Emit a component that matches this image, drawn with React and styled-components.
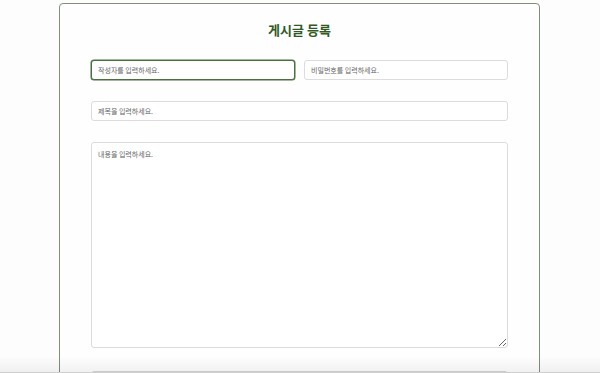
import React from 'react';
import styled, { createGlobalStyle } from 'styled-components';

const GlobalStyle = createGlobalStyle`
  html, body {
    margin: 0;
    padding: 0;
    background: #fdfdfd;
    font-family: "Noto Sans CJK KR", "Noto Sans", sans-serif;
  }
  body::after {
    content: '';
    position: fixed;
    left: 0;
    right: 0;
    bottom: 0;
    height: 16px;
    background: linear-gradient(rgba(0, 0, 0, 0), rgba(0, 0, 0, 0.05));
    border-bottom: 1px solid #cfcfcf;
    pointer-events: none;
  }
`;

const Card = styled.div`
  width: 481px;
  box-sizing: border-box;
  margin: 3px 0 0 59px;
  padding: 16px 31px 40px;
  background: #fefefe;
  border: 1px solid #7f8f7a;
  border-radius: 4px;
`;

const Title = styled.h2`
  margin: 0 0 20px;
  text-align: center;
  font-size: 13px;
  line-height: 20px;
  font-weight: 700;
  color: #2f5a24;
`;

const Form = styled.form`
  display: flex;
  flex-direction: column;
  gap: 21px;
`;

const Row = styled.div`
  display: grid;
  grid-template-columns: 1fr 1fr;
  gap: 9px;
`;

const Input = styled.input`
  height: 20px;
  box-sizing: border-box;
  padding: 0 6px;
  font-family: inherit;
  font-size: 7px;
  background: #fff;
  border: 1px solid ${(p) => (p.$focused ? '#4b6f3e' : '#dcdcdc')};
  box-shadow: ${(p) => (p.$focused ? '0 0 0 0.5px #4b6f3e' : 'none')};
  border-radius: 3px;
  outline: none;
  &::placeholder {
    color: #666;
  }
`;

const TextArea = styled.textarea`
  height: 206px;
  box-sizing: border-box;
  padding: 6px;
  font-family: inherit;
  font-size: 7px;
  background: #fff;
  border: 1px solid #dcdcdc;
  border-radius: 3px;
  outline: none;
  resize: vertical;
  &::placeholder {
    color: #666;
  }
`;

// submit button: only its top edge shows above the fold
const Submit = styled.button`
  margin-top: 2px;
  height: 44px;
  background: #f6f6f6;
  border: 1px solid #d6d6d6;
  border-radius: 3px;
`;

const App = () => {
  return (
    <>
      <GlobalStyle />
      <Card>
        <Title>게시글 등록</Title>
        <Form onSubmit={(e) => e.preventDefault()}>
          <Row>
            <Input $focused placeholder="작성자를 입력하세요." />
            <Input type="password" placeholder="비밀번호를 입력하세요." />
          </Row>
          <Input placeholder="제목을 입력하세요." />
          <TextArea placeholder="내용을 입력하세요." />
          <Submit type="submit" aria-label="등록" />
        </Form>
      </Card>
    </>
  );
};

export default App;
